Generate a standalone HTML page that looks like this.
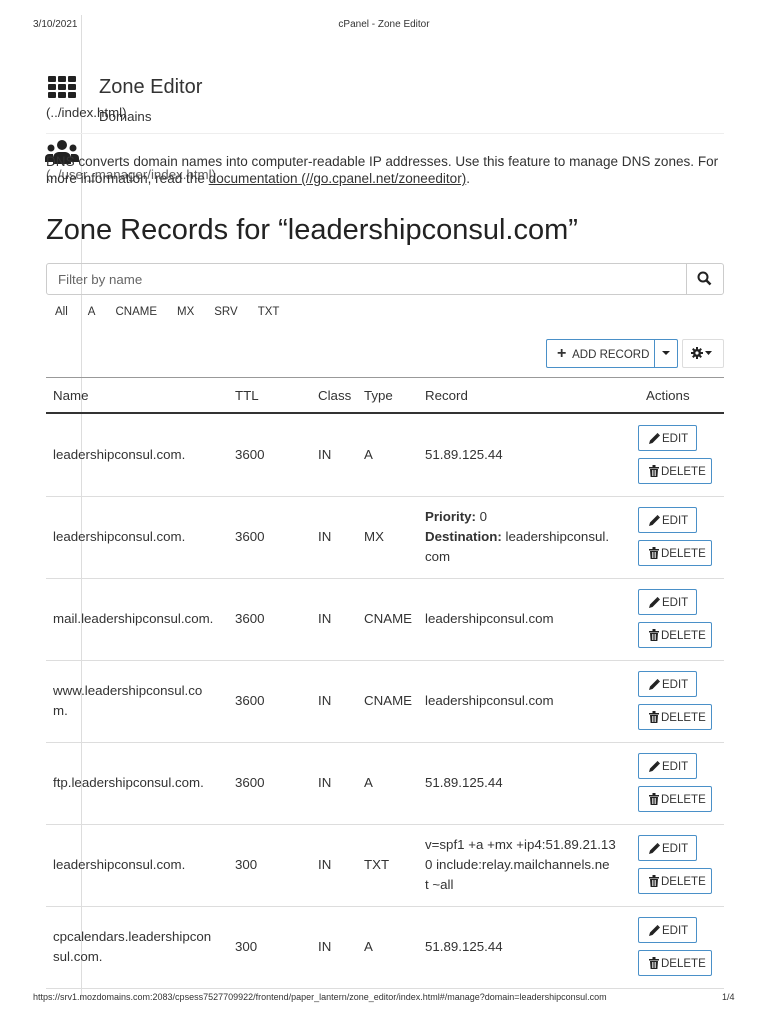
<!DOCTYPE html>
<html><head><meta charset="utf-8"><style>
body{margin:0;width:768px;height:1024px;background:#fff;font-family:"Liberation Sans",sans-serif;color:#333;position:relative;overflow:hidden}
.a{position:absolute;white-space:nowrap}
.t{font-size:13.3px}
.btn{position:absolute;border:1px solid #4a90c8;border-radius:2px;background:#fff;font-size:11.5px;color:#333;height:26px;line-height:26px;box-sizing:border-box}
.btn svg{vertical-align:-2px;margin-right:2px}
.hr{position:absolute;left:46px;width:678px;height:1px;background:#ddd}
</style></head><body>
<div class="a" style="left:0;top:19px;width:768px;text-align:center;font-size:10px">cPanel - Zone Editor</div>
<div class="a" style="left:33px;top:19px;font-size:10px">3/10/2021</div>
<div class="a" style="left:81px;top:15px;width:1px;height:985px;background:#ddd"></div>
<svg class="a" style="left:48px;top:76px" width="28" height="24"><g fill="#222"><rect x="0" y="0" width="8" height="6" rx="1"/><rect x="10" y="0" width="8" height="6" rx="1"/><rect x="20" y="0" width="8" height="6" rx="1"/><rect x="0" y="8" width="8" height="6" rx="1"/><rect x="10" y="8" width="8" height="6" rx="1"/><rect x="20" y="8" width="8" height="6" rx="1"/><rect x="0" y="16" width="8" height="6" rx="1"/><rect x="10" y="16" width="8" height="6" rx="1"/><rect x="20" y="16" width="8" height="6" rx="1"/></g></svg>
<div class="a" style="left:99px;top:76px;font-size:20px">Zone Editor</div>
<div class="a t" style="left:46px;top:105px">(../index.html)</div>
<div class="a t" style="left:99px;top:109px">Domains</div>
<div class="hr" style="top:133px;background:#eee"></div>
<svg class="a" style="left:45px;top:140px" width="34" height="24"><g fill="#222"><circle cx="17" cy="5" r="5"/><circle cx="6" cy="8" r="3.5"/><circle cx="28" cy="8" r="3.5"/><path d="M8 24v-6a6 6 0 0 1 6-6h6a6 6 0 0 1 6 6v6z"/><path d="M0 22v-4a4 4 0 0 1 4-4h4v8z"/><path d="M34 22v-4a4 4 0 0 0-4-4h-4v8z"/></g></svg>
<div class="a" style="left:46px;top:154px;font-size:13.55px">DNS converts domain names into computer-readable IP addresses. Use this feature to manage DNS zones. For</div>
<div class="a" style="left:46px;top:171px;font-size:13.55px">more information, read the <u>documentation (//go.cpanel.net/zoneeditor)</u>.</div>
<div class="a t" style="left:46px;top:167px;opacity:.8">(../user_manager/index.html)</div>
<div class="a" style="left:46px;top:214px;font-size:29px;color:#222">Zone Records for “leadershipconsul.com”</div>
<div class="a" style="left:46px;top:263px;width:678px;height:32px;border:1px solid #ccc;border-radius:3px;box-sizing:border-box"></div>
<div class="a" style="left:686px;top:263px;width:1px;height:32px;background:#ccc"></div>
<div class="a t" style="left:58px;top:272px;color:#666">Filter by name</div>
<svg class="a" style="left:697px;top:271px" width="15" height="15"><circle cx="6" cy="6" r="4.5" fill="none" stroke="#222" stroke-width="2"/><path d="M9.5 9.5l4 4" stroke="#222" stroke-width="2.5"/></svg>
<div class="a" style="left:55px;top:306px;font-size:11.5px">All<span style="margin-left:20px">A</span><span style="margin-left:20px">CNAME</span><span style="margin-left:20px">MX</span><span style="margin-left:20px">SRV</span><span style="margin-left:20px">TXT</span></div>
<div class="btn" style="left:546px;top:339px;width:132px;height:29px;line-height:28px;padding-left:10px;font-size:11.5px"><b style="font-size:16px">+</b>&nbsp; ADD RECORD</div>
<div class="a" style="left:654px;top:339px;width:1px;height:29px;background:#4a90c8"></div>
<svg class="a" style="left:662px;top:351px" width="8" height="5"><path d="M0 0h8l-4 4z" fill="#222"/></svg>
<div class="btn" style="left:682px;top:339px;width:42px;height:29px;border-color:#ddd"></div>
<svg class="a" style="left:691px;top:347px" width="12" height="12" viewBox="0 0 12 12"><g fill="#222"><circle cx="6" cy="6" r="4"/><rect x="5" y="0" width="2" height="12"/><rect x="0" y="5" width="12" height="2"/><rect x="5" y="0" width="2" height="12" transform="rotate(45 6 6)"/><rect x="5" y="0" width="2" height="12" transform="rotate(-45 6 6)"/></g><circle cx="6" cy="6" r="1.6" fill="#fff"/></svg>
<svg class="a" style="left:705px;top:351px" width="7" height="4"><path d="M0 0h7l-3.5 4z" fill="#222"/></svg>
<div class="a" style="left:46px;top:377px;width:678px;height:1px;background:#999"></div>
<div class="a t" style="left:53px;top:388px">Name</div>
<div class="a t" style="left:235px;top:388px">TTL</div>
<div class="a t" style="left:318px;top:388px">Class</div>
<div class="a t" style="left:364px;top:388px">Type</div>
<div class="a t" style="left:425px;top:388px">Record</div>
<div class="a t" style="left:646px;top:388px">Actions</div>
<div class="a" style="left:46px;top:412px;width:678px;height:2px;background:#333"></div>
<div id="rows"></div>
<script>
var R=[["leadershipconsul.com.","3600","A","51.89.125.44"],
["leadershipconsul.com.","3600","MX","<b>Priority:</b> 0<br><b>Destination:</b> leadershipconsul.<br>com"],
["mail.leadershipconsul.com.","3600","CNAME","leadershipconsul.com"],
["www.leadershipconsul.co<br>m.","3600","CNAME","leadershipconsul.com"],
["ftp.leadershipconsul.com.","3600","A","51.89.125.44"],
["leadershipconsul.com.","300","TXT","v=spf1 +a +mx +ip4:51.89.21.13<br>0 include:relay.mailchannels.ne<br>t ~all"],
["cpcalendars.leadershipcon<br>sul.com.","300","A","51.89.125.44"]];
var pen='<svg width="11" height="11" viewBox="0 0 11 11"><path d="M0 11l1-3.5 6.5-6.5 2.5 2.5-6.5 6.5z" fill="#222"/><path d="M8 0.5l2.5 2.5" stroke="#222" stroke-width="1.5"/></svg>';
var tr='<svg width="10" height="12" viewBox="0 0 10 12"><path d="M0 2h10v1.5H0zM3.5 0h3v2h-3zM1 4h8l-.6 8H1.6z" fill="#222"/><path d="M3.5 5v6M5 5v6M6.5 5v6" stroke="#fff" stroke-width=".7"/></svg>';
var h="";
R.forEach(function(r,i){var y=414+i*82,c=y+41;
function txt(x,s){var n=(s.match(/<br>/g)||[]).length+1;return '<div class="a t" style="left:'+x+'px;top:'+(c-n*10)+'px;line-height:20px">'+s+'</div>';}
h+=txt(53,r[0])+txt(235,r[1])+txt(318,"IN")+txt(364,r[2])+txt(425,r[3]);
h+='<div class="btn" style="left:638px;top:'+(y+11)+'px;width:59px;padding-left:10px">'+pen+'EDIT</div>';
h+='<div class="btn" style="left:638px;top:'+(y+44)+'px;width:74px;padding-left:10px">'+tr+'DELETE</div>';
h+='<div class="hr" style="top:'+(y+82)+'px"></div>';});
document.getElementById("rows").innerHTML=h;
</script>
<div class="a" style="left:33px;top:992px;font-size:9px">https://srv1.mozdomains.com:2083/cpsess7527709922/frontend/paper_lantern/zone_editor/index.html#/manage?domain=leadershipconsul.com</div>
<div class="a" style="left:722px;top:992px;font-size:9px">1/4</div>
</body></html>
